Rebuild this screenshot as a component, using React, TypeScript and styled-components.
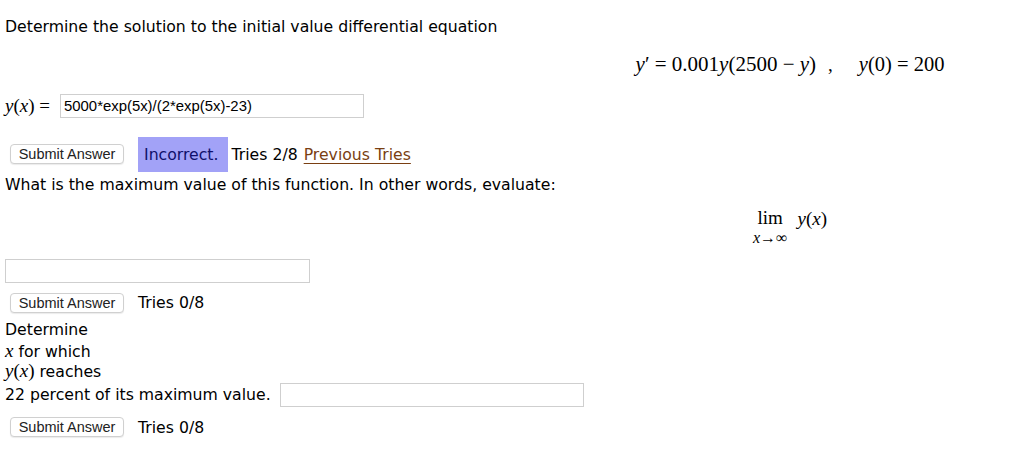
import React from 'react';
import styled, { createGlobalStyle } from 'styled-components';

const GlobalStyle = createGlobalStyle`
  body {
    margin: 0;
    background: #ffffff;
    color: #000000;
    font-family: 'DejaVu Sans', Verdana, sans-serif;
    font-size: 15.7px;
  }
`;

const Page = styled.div`
  padding: 17px 0 0 5px;
  width: 1019px;
`;

const Text = styled.div<{ $top?: number }>`
  height: 20.5px;
  line-height: 20.5px;
  margin-top: ${(p) => p.$top ?? 0}px;
`;

const DisplayMath = styled.div<{ $top: number; $height: number }>`
  margin-top: ${(p) => p.$top}px;
  height: ${(p) => p.$height}px;
  margin-left: 575px;
  width: 420px;
  display: flex;
  justify-content: center;
  align-items: center;
  font-family: 'Liberation Serif', 'Times New Roman', serif;
  font-size: 19px;
  white-space: pre;
`;

const Equation = styled.span<{ $size: number }>`
  font-size: ${(p) => p.$size}px;
`;

const I = styled.i`
  font-style: italic;
  font-family: 'Liberation Serif', 'Times New Roman', serif;
`;

const MathInline = styled.span`
  font-family: 'Liberation Serif', 'Times New Roman', serif;
  font-size: 19px;
  line-height: 1;
`;

const Gap = styled.span<{ $w: number }>`
  display: inline-block;
  width: ${(p) => p.$w}px;
`;

const AnswerRow = styled.div<{ $top: number; $gap?: number }>`
  display: flex;
  align-items: center;
  gap: ${(p) => p.$gap ?? 5}px;
  margin-top: ${(p) => p.$top}px;
  height: 24px;
`;

const AnswerInput = styled.input<{ $width: number }>`
  box-sizing: border-box;
  width: ${(p) => p.$width}px;
  height: 24px;
  border: 1px solid #cfcfcf;
  padding: 0 3px;
  font-family: 'Liberation Sans', Arial, sans-serif;
  font-size: 14.9px;
  color: #000;
  outline: none;
`;

const SubmitRow = styled.div<{ $top: number }>`
  display: flex;
  align-items: center;
  margin-top: ${(p) => p.$top}px;
  padding-left: 5px;
  height: 35px;
`;

const SubmitButton = styled.button`
  box-sizing: border-box;
  width: 114px;
  height: 20px;
  background: #ffffff;
  border: 1px solid #d0d0d0;
  border-radius: 4px;
  box-shadow: 0 1px 1px rgba(0, 0, 0, 0.08);
  font-family: 'Liberation Sans', Arial, sans-serif;
  font-size: 14.5px;
  color: #222;
  padding: 0;
  margin-right: 14px;
`;

const Verdict = styled.span`
  display: flex;
  align-items: center;
  height: 35px;
  padding: 0 9px 0 6px;
  background: #a2a2f7;
  color: #10106b;
  margin-right: 4px;
`;

const Tries = styled.span`
  margin-right: 6px;
`;

const PrevLink = styled.a`
  color: #7a3f12;
  text-decoration: underline;
  text-underline-offset: 3px;
`;

const Limit = styled.span`
  display: inline-flex;
  flex-direction: column;
  align-items: center;
  line-height: 1;
  margin-right: 10px;
`;

const LimitSub = styled.span`
  font-size: 16px;
  margin-top: 3px;
`;

const LimitExpr = styled.span`
  display: inline-flex;
  align-items: flex-start;
`;

const LimitBlock = () => (
  <LimitExpr>
    <Limit>
      <span>lim</span>
      <LimitSub>
        <I>x</I>→∞
      </LimitSub>
    </Limit>
    <span>
      <I>y</I>(<I>x</I>)
    </span>
  </LimitExpr>
);

export default function App() {
  return (
    <>
      <GlobalStyle />
      <Page>
        <Text>Determine the solution to the initial value differential equation</Text>
        <DisplayMath $top={14} $height={26}>
          <Equation $size={21}>
            <I>y</I>′ = 0.001<I>y</I>(2500 − <I>y</I>)
          </Equation>
          <Gap $w={12} />
          <span>,</span>
          <Gap $w={26} />
          <Equation $size={20.5}>
            <I>y</I>(0) = 200
          </Equation>
        </DisplayMath>
        <AnswerRow $top={16}>
          <MathInline>
            <I>y</I>(<I>x</I>) =
          </MathInline>
          <Gap $w={0} />
          <AnswerInput $width={304} defaultValue="5000*exp(5x)/(2*exp(5x)-23)" />
        </AnswerRow>
        <SubmitRow $top={19}>
          <SubmitButton>Submit Answer</SubmitButton>
          <Verdict>Incorrect.</Verdict>
          <Tries>Tries 2/8</Tries>
          <PrevLink href="#">Previous Tries</PrevLink>
        </SubmitRow>
        <Text $top={3}>What is the maximum value of this function. In other words, evaluate:</Text>
        <DisplayMath $top={12} $height={40}>
          <LimitBlock />
        </DisplayMath>
        <AnswerRow $top={12}>
          <AnswerInput $width={305} />
        </AnswerRow>
        <SubmitRow $top={2}>
          <SubmitButton>Submit Answer</SubmitButton>
          <Tries>Tries 0/8</Tries>
        </SubmitRow>
        <Text $top={0}>Determine</Text>
        <Text>
          <MathInline><I>x</I></MathInline> for which
        </Text>
        <Text>
          <MathInline><I>y</I>(<I>x</I>)</MathInline> reaches
        </Text>
        <AnswerRow $top={1} $gap={9}>
          <span>22 percent of its maximum value.</span>
          <AnswerInput $width={304} />
        </AnswerRow>
        <SubmitRow $top={3}>
          <SubmitButton>Submit Answer</SubmitButton>
          <Tries>Tries 0/8</Tries>
        </SubmitRow>
      </Page>
    </>
  );
}
